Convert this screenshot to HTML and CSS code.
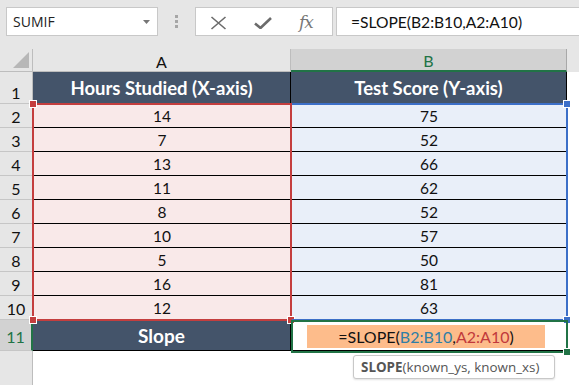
FILE: index.html
```
<!DOCTYPE html>
<html>
<head>
<meta charset="utf-8">
<link rel="stylesheet" href="styles.css">
</head>
<body>
<div class="toolbar">
  <div class="namebox">
    <span>SUMIF</span>
    <svg class="caret" width="7" height="4" viewBox="0 0 7 4"><path d="M0 0H7L3.5 4Z" fill="#767676"/></svg>
  </div>
  <div class="dots"><i></i><i></i><i></i></div>
  <div class="fxbox">
    <svg class="icon-x" width="17" height="14" viewBox="0 0 17 14"><path d="M1.5 1L15.5 13M15.5 1L1.5 13" stroke="#6b6b6b" stroke-width="1.6" fill="none"/></svg>
    <svg class="icon-check" width="18" height="12" viewBox="0 0 18 12"><path d="M1 6.5L6.5 11L17 1" stroke="#6b6b6b" stroke-width="2.6" fill="none"/></svg>
    <span class="fx">fx</span>
  </div>
  <div class="formula">=SLOPE(B2:B10,A2:A10)</div>
</div>

<div class="sheet">
  <div class="corner"><span class="tri"></span></div>
  <div class="colhead">A</div>
  <div class="colhead sel">B</div>
  <div class="colhead rest"></div>

  <div class="rowhead">1</div>
  <div class="cell head">Hours Studied (X-axis)</div>
  <div class="cell head">Test Score (Y-axis)</div>
  <div class="blank"></div>

  <div class="rowhead">2</div><div class="cell xa">14</div><div class="cell yb">75</div><div class="blank"></div>
  <div class="rowhead">3</div><div class="cell xa">7</div><div class="cell yb">52</div><div class="blank"></div>
  <div class="rowhead">4</div><div class="cell xa">13</div><div class="cell yb">66</div><div class="blank"></div>
  <div class="rowhead">5</div><div class="cell xa">11</div><div class="cell yb">62</div><div class="blank"></div>
  <div class="rowhead">6</div><div class="cell xa">8</div><div class="cell yb">52</div><div class="blank"></div>
  <div class="rowhead">7</div><div class="cell xa">10</div><div class="cell yb">57</div><div class="blank"></div>
  <div class="rowhead">8</div><div class="cell xa">5</div><div class="cell yb">50</div><div class="blank"></div>
  <div class="rowhead">9</div><div class="cell xa">16</div><div class="cell yb">81</div><div class="blank"></div>
  <div class="rowhead">10</div><div class="cell xa">12</div><div class="cell yb">63</div><div class="blank"></div>

  <div class="rowhead sel">11</div>
  <div class="cell head slope">Slope</div>
  <div class="cell edit"><span class="hl">=SLOPE(<span class="rb">B2:B10</span>,<span class="ra">A2:A10</span>)</span></div>
  <div class="blank"></div>

  <div class="rowhead last"></div>
  <div class="blank"></div>
  <div class="blank"></div>
  <div class="blank"></div>

  <div class="range red"><i class="h tl"></i><i class="h br"></i><i class="h bl"></i></div>
  <div class="range blue"><i class="h tr"></i><i class="h br"></i></div>
  <div class="range green"><i class="h br"></i></div>
  <div class="tip"><b>SLOPE</b>(known_ys, known_xs)</div>
</div>
</body>
</html>
```
FILE: styles.css
```
* { box-sizing: border-box; }
html, body { margin: 0; padding: 0; }
body {
  width: 579px;
  height: 385px;
  overflow: hidden;
  background: #ffffff;
  font-family: "Lato", "Open Sans", sans-serif;
}
.toolbar {
  height: 49px;
  background: #e6e6e6;
  display: flex;
  align-items: flex-start;
  padding: 7px 0 0 6px;
}
.namebox {
  width: 152px;
  height: 29px;
  background: #fff;
  border: 1px solid #c8c8c8;
  display: flex;
  align-items: center;
  justify-content: space-between;
  padding: 0 7px 0 6px;
  font-family: "Open Sans", sans-serif;
  font-size: 14px;
  color: #222;
}
.dots {
  display: flex;
  flex-direction: column;
  gap: 2px;
  margin: 8px 17px 0 17px;
}
.dots i {
  display: block;
  width: 3px;
  height: 3px;
  background: #a6a6a6;
}
.fxbox {
  width: 138px;
  height: 29px;
  background: #fff;
  border: 1px solid #c8c8c8;
  display: flex;
  align-items: center;
  padding-left: 14px;
}
.icon-x { margin-right: 27px; margin-top: 2px; }
.icon-check { margin-right: 27px; margin-top: 3px; }
.fx {
  font-family: "DejaVu Serif", "Liberation Serif", serif;
  font-style: italic;
  font-size: 17px;
  color: #777;
  letter-spacing: -1px;
}
.formula {
  flex: 1;
  height: 29px;
  margin-left: 3px;
  background: #fff;
  border: 1px solid #c8c8c8;
  border-right: none;
  padding-left: 14px;
  display: flex;
  align-items: center;
  font-size: 15.6px;
  color: #111;
}
.sheet {
  position: relative;
  display: grid;
  grid-template-columns: 33px 258px 276px 1fr;
  grid-template-rows: 23px 32px repeat(9, 24px) 31px 1fr;
  height: 336px;
  font-size: 15.5px;
}
.corner {
  background: #e6e6e6;
  border-right: 1px solid #bdbdbd;
  border-bottom: 1px solid #bdbdbd;
  position: relative;
}
.tri {
  position: absolute;
  right: 3px;
  bottom: 3px;
  width: 0;
  height: 0;
  border-left: 16px solid transparent;
  border-bottom: 16px solid #b7b7b7;
}
.colhead {
  background: #e6e6e6;
  border-right: 1px solid #bdbdbd;
  border-bottom: 1px solid #bdbdbd;
  display: flex;
  align-items: center;
  justify-content: center;
  color: #111;
  font-size: 16px;
  padding-top: 2px;
}
.colhead.sel {
  background: #d2d2d2;
  color: #217346;
  border-bottom: 2px solid #217346;
  border-right: 1px solid #a8a8a8;
}
.colhead.rest { border: none; }
.rowhead {
  background: #e6e6e6;
  border-right: 1px solid #bdbdbd;
  border-bottom: 1px solid #c6c6c6;
  display: flex;
  align-items: flex-end;
  justify-content: center;
  padding-bottom: 1px;
  color: #111;
  font-size: 16px;
}
.rowhead.sel {
  background: #d2d2d2;
  color: #217346;
  border-right: 2px solid #217346;
  align-items: center;
  padding-top: 4px;
}
.rowhead.last { border-bottom: none; }
.cell {
  display: flex;
  align-items: center;
  justify-content: center;
  border-bottom: 1px solid #000;
  color: #111;
  padding-top: 1px;
}
.cell.head {
  background: #44546a;
  color: #fff;
  font-weight: 700;
  font-size: 18.5px;
  border-right: 1px solid #000;
}
.cell.slope { font-size: 19px; }
.cell.xa { background: #f9e9e9; }
.cell.yb { background: #e9eff9; }
.cell.edit { background: #fff; justify-content: flex-start; }
.hl {
  background: #fdbc8b;
  width: 238px;
  height: 23px;
  display: flex;
  align-items: center;
  justify-content: center;
  margin-left: 16px;
  margin-top: 1px;
  color: #111;
  font-size: 16px;
}
.rb { color: #2f7ea6; }
.ra { color: #c1393c; }
.blank { background: #fff; }
.range {
  position: absolute;
  border: 2px solid;
}
.range.red { left: 32px; top: 54px; width: 260px; height: 218px; border-color: #c43e3e; }
.range.blue { left: 292px; top: 54px; width: 276px; height: 218px; border-color: #3c6fc8; border-left: none; }
.range.green { left: 291px; top: 271px; width: 277px; height: 33px; border-color: #217346; }
.h {
  position: absolute;
  width: 6px;
  height: 6px;
  outline: 1px solid #fff;
}
.red .h { background: #c43e3e; }
.blue .h { background: #3c6fc8; }
.green .h { background: #217346; }
.h.tl { left: -4px; top: -4px; }
.h.bl { left: -4px; bottom: -4px; }
.h.br { right: -4px; bottom: -4px; }
.h.tr { right: -4px; top: -4px; }
.tip {
  position: absolute;
  left: 353px;
  top: 306px;
  width: 202px;
  height: 24px;
  background: #fff;
  border: 1px solid #c8c8c8;
  border-radius: 3px;
  box-shadow: 0 1px 2px rgba(0,0,0,0.12);
  font-family: "Open Sans", sans-serif;
  font-size: 13.4px;
  color: #555;
  display: flex;
  align-items: center;
  padding-left: 7px;
  white-space: nowrap;
}
.tip b { font-weight: 700; color: #555; }
```
